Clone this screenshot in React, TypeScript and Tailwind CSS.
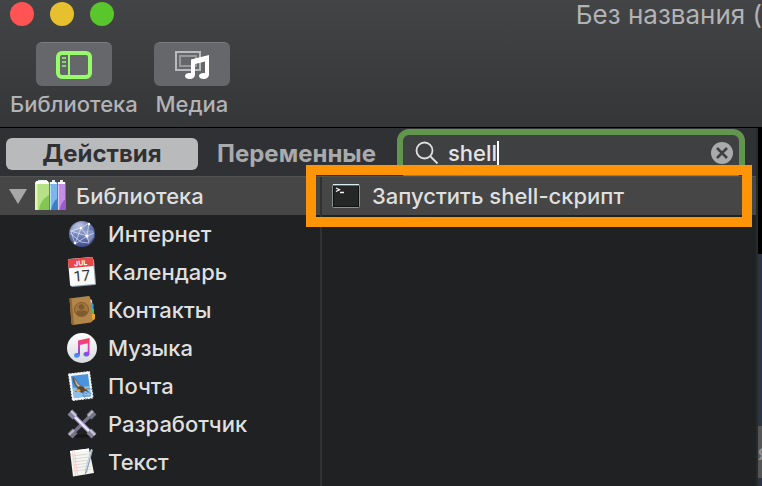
import React from 'react'

function LibraryToggleIcon() {
    return (
        <svg viewBox="0 0 36 28" className="h-7 w-9" fill="none">
            <rect x="2" y="2" width="32" height="24" rx="4" stroke="#98fb6c" strokeWidth="4" />
            <path d="M13 3v22" stroke="#98fb6c" strokeWidth="2" />
            <path d="M6 7h4M6 11h4M6 15h4" stroke="#98fb6c" strokeOpacity=".75" strokeWidth="2" />
        </svg>
    )
}

function MediaIcon() {
    return (
        <svg viewBox="0 0 36 30" className="h-[30px] w-9" fill="none">
            <rect x="2" y="2" width="24" height="18" stroke="#b9babc" strokeWidth="2" />
            <rect x="6" y="6" width="16" height="10" stroke="#97989a" strokeWidth="2" />
            <path
                d="M17 9.600 35 5v19.500c0 2.700-2.200 4.500-5.300 4.500-2.700 0-4.700-1.100-4.700-2.900 0-2 2.200-3.100 4.500-3.100.6 0 1 0 1.500.2V11.500l-10 2.600v10.400c0 2.700-2.200 4.500-5.300 4.500C13 29 11 27.900 11 26.100c0-2 2.200-3.100 4.500-3.100.6 0 1 0 1.500.2z"
                fill="#fff"
            />
        </svg>
    )
}

function BooksIcon() {
    return (
        <svg viewBox="0 0 32 32" className="size-8 shrink-0">
            <path d="M4 0h9v3H4zM18 0h3v3h-3zM26 0h3v3h-3z" fill="#e9ece8" />
            <rect x="1" y="2" width="14" height="28" rx="1" fill="#b5e287" />
            <path d="M1 4h2.500v26H1z" fill="#e6f5ac" />
            <path d="M15 15v15H5c1-8 5-12 10-15z" fill="#83c653" />
            <rect x="15.500" y="2" width="7.500" height="28" rx="1" fill="#7cb5ec" />
            <path d="M16 5h1v25h-1z" fill="#b8dcfa" />
            <path d="M23 19v11h-6c1-5 3-9 6-11z" fill="#3a7fc4" />
            <rect x="23.500" y="2" width="8" height="28" rx="1" fill="#c490e6" />
            <path d="M24 5h1v25h-1z" fill="#e0c5f5" />
            <path d="M31.500 19v11h-6c1-5 3-9 6-11z" fill="#9c5acb" />
            <path d="M2 1h12l1 3H1zM16 2h6l1 2h-7zM24 2h7v2h-7z" fill="#fff" />
        </svg>
    )
}

function GlobeIcon() {
    return (
        <svg viewBox="0 0 30 30" className="size-[30px]">
            <defs>
                <radialGradient id="globe" cx=".4" cy=".2" r=".85">
                    <stop offset="0" stopColor="#b4bddb" />
                    <stop offset=".5" stopColor="#6b7ab3" />
                    <stop offset="1" stopColor="#3b4785" />
                </radialGradient>
            </defs>
            <circle cx="15" cy="15" r="13" fill="url(#globe)" />
            <path d="M4 10c4-6 9-7 13-5l-3 5-5 1-2 5zM17 12l9-1 1 7-4 5-4-3z" fill="#c4cce4" opacity=".4" />
            <path
                d="M3 12 14 9l8-5M14 9 8 25l12-8 7-3M14 9l6 8-16-5 4 13M22 4l-2 13 2 7M3 14l11 9 8 1"
                stroke="#e9edfb"
                strokeWidth=".8"
                fill="none"
                opacity=".8"
            />
            <g fill="#fff">
                <circle cx="14" cy="9" r="1.200" />
                <circle cx="20" cy="17" r="1.600" />
                <circle cx="8" cy="24" r="1.200" />
                <circle cx="22" cy="5" r="1.200" />
            </g>
        </svg>
    )
}

function CalendarIcon() {
    return (
        <svg viewBox="0 0 30 30" className="size-[30px]">
            <g transform="rotate(-5 15 15)">
                <rect x="3" y="3" width="25" height="26" rx="1" fill="#8fa2ad" />
                <rect x="2" y="1" width="25" height="27" rx="1" fill="#fafafa" />
                <path d="M2 1h25v9H2z" fill="#e8474a" />
                <text x="14.500" y="8.500" fontSize="7" fontWeight="700" fill="#fff" textAnchor="middle" fontFamily="Inter, sans-serif">JUL</text>
                <text x="14.500" y="24" fontSize="15" fontWeight="400" fill="#333" textAnchor="middle" fontFamily="Roboto, sans-serif">17</text>
            </g>
        </svg>
    )
}

function ContactsIcon() {
    return (
        <svg viewBox="0 0 30 30" className="size-[30px]">
            <path d="m23 4 2 1 .5 7-2 1z" fill="#c9ced1" />
            <path d="m24 8 2.500 1v6H24z" fill="#35a2dd" />
            <path d="M24 14h3v6h-3z" fill="#55b957" />
            <path d="M24 19h4v5l-3 2z" fill="#eda728" />
            <path d="M2.500 3.500 21.500 1l1.500.7L25.500 26 24 27.500 6 30 4.500 29z" fill="#b28549" />
            <path d="M2.500 3.500 4.500 3.300 7 29.600 6 30 4.500 29z" fill="#8f6734" />
            <circle cx="14.500" cy="14.500" r="7" fill="#a3763f" stroke="#7f5a2c" strokeWidth="1" />
            <circle cx="14.500" cy="12" r="2.800" fill="#7f5a2c" />
            <path d="M9 18c1-2.500 3-2.500 5.500-2.500s5 0 6 2c-1 2-3 3.500-6 3.500S10 20 9 18z" fill="#7f5a2c" />
        </svg>
    )
}

function MusicIcon() {
    return (
        <svg viewBox="0 0 30 30" className="size-[30px]">
            <defs>
                <linearGradient id="note" x1=".6" y1="0" x2=".4" y2="1">
                    <stop offset="0" stopColor="#fc3f55" />
                    <stop offset=".4" stopColor="#e83fae" />
                    <stop offset=".75" stopColor="#7a50f0" />
                    <stop offset="1" stopColor="#3d9df5" />
                </linearGradient>
                <linearGradient id="disc" x1="0" y1="0" x2="0" y2="1">
                    <stop offset="0" stopColor="#fdfdfe" />
                    <stop offset="1" stopColor="#d8dade" />
                </linearGradient>
            </defs>
            <circle cx="15" cy="15" r="15" fill="url(#disc)" />
            <path
                d="M11 7.500 22.500 5v15.500c0 1.900-1.300 3.100-3.200 3.100-1.700 0-2.800-.9-2.800-2.300 0-1.600 1.200-2.500 2.900-2.500h1.300v-8.500L13 11.900v9.600c0 2-1.300 3.300-3.200 3.300-1.700 0-2.800-.9-2.800-2.300 0-1.700 1.200-2.600 2.900-2.600H11z"
                fill="url(#note)"
            />
        </svg>
    )
}

function MailIcon() {
    return (
        <svg viewBox="0 0 30 30" className="size-[30px]">
            <path d="M1.500 3 22.500.5 26 27 5.500 29.500z" fill="#f4f6f7" stroke="#f4f6f7" strokeDasharray="2 1" />
            <path d="m4 5 17-2 2.800 22L7 27z" fill="#4b94dd" />
            <path d="m5.500 17 17-2 1.300 10L7 27z" fill="#8abff0" />
            <path d="M5.500 6c3 0 4 4 5.500 6l4 3 2 4-4 1-4-4c-2-3-4-6-3.500-10z" fill="#65594c" />
            <path d="m7 7 4 6 3 2-2 2-3-4z" fill="#c2bcae" />
            <path d="m12 15 5 1 5 5-4-1-3 2-4-2-3 1 3-4z" fill="#5a4330" />
            <path d="m8 19 4-1 2 2-3 1zM17 16l3 1-2 2z" fill="#e7a63b" />
            <g fill="none" stroke="#315e89" strokeWidth=".6" opacity=".8">
                <circle cx="21.500" cy="23" r="5.500" />
                <path d="M15 22c2-2 3 2 5 0s3 2 5 0M17 25h7" />
            </g>
        </svg>
    )
}

function DeveloperIcon() {
    return (
        <svg viewBox="0 0 30 30" className="size-[30px]">
            <ellipse cx="15" cy="27" rx="11" ry="1.500" fill="#141515" />
            <path d="M24 6 6 24" stroke="#77728d" strokeWidth="3.500" />
            <path d="m27 3-5 5M8 22l-5 5" stroke="#777489" strokeWidth="7" />
            <path d="m26 2-5 5M7 21l-5 5" stroke="#bab8c5" strokeWidth="2" />
            <path d="m6 6 18 18" stroke="#a29bc2" strokeWidth="4.500" />
            <path d="m6 6 18 18" stroke="#eeeaf8" strokeWidth="2" />
            <path d="m3 3 5 5m14 14 5 5" stroke="#85819b" strokeWidth="7" />
            <path d="m4 2 5 5m14 14 5 5" stroke="#cbc8d6" strokeWidth="2" />
        </svg>
    )
}

function TextIcon() {
    return (
        <svg viewBox="0 0 30 30" className="size-[30px]">
            <path d="M3 4 22 1.500 27 26 6 29.500z" fill="#f5f4ef" />
            <path d="M3 4 22 1.500v2L3.300 6z" fill="#fff" />
            <path d="m5 9 17-2M5.500 12l17-2M6 15l17-2M6.500 18l17-2M7 21l17-2M7.500 24l17-2" stroke="#d3d5d5" strokeWidth=".8" />
            <path d="m5.500 4 3 25M7.500 4l3 24.500" stroke="#f3bcbc" strokeWidth=".6" />
            <path d="m24 2 2 1-6 22-2 3v-4z" fill="#8ba2b1" />
            <path d="m24 2 1 .5-6 22-1 .5z" fill="#d2e0e8" />
        </svg>
    )
}

function TerminalIcon() {
    return (
        <svg viewBox="0 0 28 24" className="h-6 w-7 shrink-0">
            <rect x=".5" y=".5" width="27" height="23" rx="1" fill="#111" stroke="#8b9292" />
            <path d="M1 .7h26" stroke="#d7edf2" strokeWidth="1.400" />
            <rect x="2" y="2" width="24" height="20" fill="#252626" />
            <path d="m4 4 3.500 1.700L4 7.500M8 8.500h4" fill="none" stroke="#f2f2f2" strokeWidth="1.300" />
        </svg>
    )
}

const toolbar = [
    { label: 'Библиотека', icon: <LibraryToggleIcon /> },
    { label: 'Медиа', icon: <MediaIcon /> },
]

const categories = [
    { label: 'Интернет', icon: <GlobeIcon /> },
    { label: 'Календарь', icon: <CalendarIcon /> },
    { label: 'Контакты', icon: <ContactsIcon /> },
    { label: 'Музыка', icon: <MusicIcon /> },
    { label: 'Почта', icon: <MailIcon /> },
    { label: 'Разработчик', icon: <DeveloperIcon /> },
    { label: 'Текст', icon: <TextIcon /> },
]

export default function App() {
    return (
        <div className="flex min-h-screen flex-col overflow-hidden bg-[#202122] font-['Inter',sans-serif] text-[22px] leading-7 font-medium text-[#dfdfdf]">
            {/* Title bar and toolbar */}
            <header className="flex h-32 justify-between border-b border-black bg-linear-to-b from-[#434446] to-[#353638] text-[#b2b3b5]">
                <div>
                    <div className="flex gap-4 px-[10px] pt-[2px]">
                        <button aria-label="Закрыть" className="size-6 rounded-full bg-[#ff5354]" />
                        <button aria-label="Свернуть" className="size-6 rounded-full bg-[#e6c02e]" />
                        <button aria-label="Развернуть" className="size-6 rounded-full bg-[#59c72c]" />
                    </div>
                    <div className="flex gap-4 px-[10px] pt-4">
                        {toolbar.map((item) => (
                            <button key={item.label} className="flex flex-col items-center gap-1">
                                <span className="flex h-11 w-[76px] items-center justify-center rounded-md border-t border-[#7b7c7e] bg-[#66676a]">
                                    {item.icon}
                                </span>
                                <span>{item.label}</span>
                            </button>
                        ))}
                    </div>
                </div>
                <h1 className="pt-px text-[26px] leading-7 font-normal whitespace-nowrap">Без названия (</h1>
            </header>

            <div className="flex grow">
                <main className="flex min-w-0 grow flex-col">
                    {/* Tabs and search */}
                    <div className="flex h-12 items-center bg-[#303134] pr-[11px] pl-[6px] text-2xl font-bold">
                        <button className="mt-1 h-8 w-48 shrink-0 rounded-md bg-[#b9babc] leading-8 text-[#303134]">Действия</button>
                        <button className="mt-1 ml-[19px] shrink-0 leading-8 text-[#a9aaac]">Переменные</button>
                        <label className="mt-[2px] ml-[21px] flex h-12 min-w-0 grow items-center rounded-xl border-6 border-[#62964f] bg-[#3f4042] px-[6px]">
                            <svg viewBox="0 0 24 24" className="ml-[6px] size-6 shrink-0" fill="none" stroke="#dedfe0" strokeWidth="1.800">
                                <circle cx="9.500" cy="9.500" r="8" />
                                <path d="m15.500 15.500 7 7" />
                            </svg>
                            <span className="sr-only">Поиск</span>
                            <span className="ml-[9px] flex min-w-0 grow items-center">
                                <input
                                    type="text"
                                    defaultValue="shell"
                                    className="field-sizing-content min-w-0 bg-transparent text-[22px] leading-7 font-medium text-[#e4e4e4] outline-none"
                                />
                                <span className="h-6 w-[2px] bg-white" />
                            </span>
                            <button aria-label="Очистить">
                                <svg viewBox="0 0 22 22" className="size-[22px]">
                                    <circle cx="11" cy="11" r="11" fill="#a9aaac" />
                                    <path d="m6 6 10 10M16 6 6 16" stroke="#3f4042" strokeWidth="2.500" />
                                </svg>
                            </button>
                        </label>
                    </div>

                    <div className="flex grow border-t border-[#515254]">
                        {/* Library tree */}
                        <nav className="w-80 shrink-0">
                            <button className="flex h-[38px] w-full items-center bg-[#464646] pl-[9px]">
                                <svg viewBox="0 0 18 15" className="w-[18px]">
                                    <path d="M0 0h18L9 15z" fill="#a8a8a8" />
                                </svg>
                                <span className="ml-[7px]">
                                    <BooksIcon />
                                </span>
                                <span className="ml-[10px]">Библиотека</span>
                            </button>
                            <ul>
                                {categories.map((item) => (
                                    <li key={item.label}>
                                        <button className="flex h-[38px] w-full items-center gap-[11px] pl-[67px]">
                                            {item.icon}
                                            <span>{item.label}</span>
                                        </button>
                                    </li>
                                ))}
                            </ul>
                        </nav>

                        {/* Search results */}
                        <section className="min-w-0 grow border-l-2 border-[#303132]">
                            <div className="relative">
                                <button className="flex h-[38px] w-full items-center gap-3 bg-[#464646] pl-[10px]">
                                    <TerminalIcon />
                                    <span>Запустить shell-скрипт</span>
                                </button>
                                <div className="pointer-events-none absolute -top-3 right-1 -bottom-3 -left-4 border-10 border-[#ff9407]" />
                            </div>
                        </section>
                    </div>
                </main>

                {/* Window edge and what lies behind it */}
                <aside className="flex w-[6px] shrink-0 flex-col overflow-hidden border-l-2 border-[#292a2b] bg-[#2c3442]">
                    <div className="h-[126px] bg-black" />
                    <div className="grow" />
                    <div className="flex h-[52px] items-center justify-start overflow-hidden bg-[#555555] text-[#909090]">
                        <span>я</span>
                    </div>
                    <div className="h-2" />
                </aside>
            </div>
        </div>
    )
}
